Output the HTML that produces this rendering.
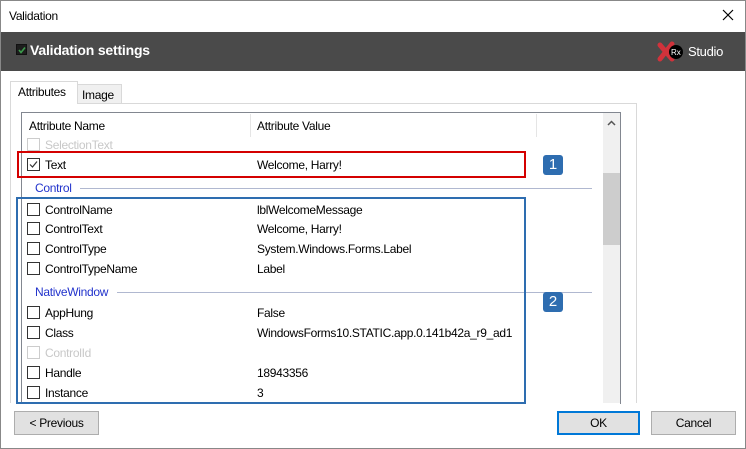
<!DOCTYPE html>
<html><head><style>
*{margin:0;padding:0;box-sizing:border-box}
body{width:746px;height:449px;overflow:hidden;background:#fff;font-family:"Liberation Sans",sans-serif;font-size:12px;color:#000;position:relative}
.a{position:absolute}
.t{position:absolute;white-space:nowrap;line-height:14px;letter-spacing:-0.3px}
.cb{position:absolute;width:13px;height:13px;border:1px solid #333;background:#fff}
.cb.d{border-color:#ccc}
.btn{position:absolute;height:24px;background:#e1e1e1;border:1px solid #adadad;text-align:center;line-height:22px;letter-spacing:-0.3px}
</style></head><body>
<div class="a" style="left:0;top:0;width:746px;height:449px;border:1px solid #888"></div>
<div class="t" style="left:9px;top:9px">Validation</div>
<svg class="a" style="left:722px;top:9px" width="12" height="12"><path d="M1 1L11 11M11 1L1 11" stroke="#000" stroke-width="1.2"/></svg>
<div class="a" style="left:1px;top:32px;width:744px;height:39px;background:#4a4a4a"></div>
<div class="a" style="left:16px;top:44px;width:11px;height:11px;background:#1d1d1d;border:1px solid #111"></div>
<svg class="a" style="left:17px;top:45px" width="10" height="10"><path d="M2 5L4 7.5L8 2.5" stroke="#3c9c4c" stroke-width="1.6" fill="none"/></svg>
<div class="t" style="left:30px;top:43px;color:#fff;font-size:14px;font-weight:bold;letter-spacing:-0.2px">Validation settings</div>
<svg class="a" style="left:656px;top:40px" width="32" height="24"><path d="M4 5 L16 19 M16 4 L4 19" stroke="#e0303a" stroke-width="5" stroke-linecap="round" opacity="0.9"/><circle cx="20" cy="12" r="7" fill="#000"/><text x="15" y="15" font-size="8" fill="#fff" font-family="Liberation Sans">Rx</text></svg>
<div class="t" style="left:688px;top:45px;color:#fff;font-size:13px">Studio</div>
<!-- tabs -->
<div class="a" style="left:10px;top:103px;width:627px;height:300px;border:1px solid #d9d9d9;border-bottom:none"></div>
<div class="a" style="left:77px;top:84px;width:45px;height:20px;background:#f0f0f0;border:1px solid #d9d9d9"></div>
<div class="t" style="left:82px;top:88px">Image</div>
<div class="a" style="left:10px;top:81px;width:68px;height:23px;background:#fff;border:1px solid #d9d9d9;border-bottom:none"></div>
<div class="t" style="left:18px;top:85px">Attributes</div>
<!-- list -->
<div class="a" style="left:21px;top:112px;width:600px;height:292px;border:1px solid #828790;border-bottom:none"></div>
<div class="a" style="left:603px;top:113px;width:17px;height:290px;background:#f0f0f0"></div>
<div class="a" style="left:603px;top:173px;width:17px;height:72px;background:#cdcdcd"></div>
<svg class="a" style="left:607px;top:120px" width="9" height="6"><path d="M1 5L4.5 1.5L8 5" stroke="#555" stroke-width="1.5" fill="none"/></svg>
<div class="a" style="left:250px;top:114px;width:1px;height:23px;background:#e5e5e5"></div>
<div class="a" style="left:536px;top:114px;width:1px;height:23px;background:#e5e5e5"></div>
<div class="t" style="left:29px;top:119px">Attribute Name</div>
<div class="t" style="left:257px;top:119px">Attribute Value</div>

<div class="cb d" style="left:27px;top:138px"></div><div class="t" style="left:45px;top:138px;color:#c8c8c8">SelectionText</div>
<div class="cb" style="left:27px;top:158px"></div><svg class="a" style="left:28px;top:159px" width="11" height="11"><path d="M2 5.5L4.5 8L9 2.5" stroke="#333" stroke-width="1.2" fill="none"/></svg><div class="t" style="left:45px;top:158px">Text</div><div class="t" style="left:257px;top:158px">Welcome, Harry!</div>
<div class="a" style="left:17px;top:151px;width:509px;height:27px;border:2px solid #d40000"></div>
<div class="a" style="left:543px;top:155px;width:20px;height:20px;background:#2e6db0;border-radius:3px;color:#fff;text-align:center;font-size:15px;line-height:20px">1</div>

<div class="t" style="left:35px;top:181px;color:#2233cc">Control</div>
<div class="a" style="left:80px;top:188px;width:512px;height:1px;background:#b0b8d0"></div>

<div class="cb" style="left:27px;top:203px"></div><div class="t" style="left:45px;top:203px">ControlName</div><div class="t" style="left:257px;top:203px">lblWelcomeMessage</div>
<div class="cb" style="left:27px;top:222px"></div><div class="t" style="left:45px;top:222px">ControlText</div><div class="t" style="left:257px;top:222px">Welcome, Harry!</div>
<div class="cb" style="left:27px;top:242px"></div><div class="t" style="left:45px;top:242px">ControlType</div><div class="t" style="left:257px;top:242px">System.Windows.Forms.Label</div>
<div class="cb" style="left:27px;top:262px"></div><div class="t" style="left:45px;top:262px">ControlTypeName</div><div class="t" style="left:257px;top:262px">Label</div>

<div class="t" style="left:35px;top:285px;color:#2233cc">NativeWindow</div>
<div class="a" style="left:117px;top:292px;width:475px;height:1px;background:#b0b8d0"></div>
<div class="a" style="left:543px;top:292px;width:20px;height:20px;background:#2e6db0;border-radius:3px;color:#fff;text-align:center;font-size:15px;line-height:20px">2</div>

<div class="cb" style="left:27px;top:306px"></div><div class="t" style="left:45px;top:306px">AppHung</div><div class="t" style="left:257px;top:306px">False</div>
<div class="cb" style="left:27px;top:326px"></div><div class="t" style="left:45px;top:326px">Class</div><div class="t" style="left:257px;top:326px">WindowsForms10.STATIC.app.0.141b42a_r9_ad1</div>
<div class="cb d" style="left:27px;top:346px"></div><div class="t" style="left:45px;top:346px;color:#c8c8c8">ControlId</div>
<div class="cb" style="left:27px;top:366px"></div><div class="t" style="left:45px;top:366px">Handle</div><div class="t" style="left:257px;top:366px">18943356</div>
<div class="cb" style="left:27px;top:386px"></div><div class="t" style="left:45px;top:386px">Instance</div><div class="t" style="left:257px;top:386px">3</div>
<div class="a" style="left:16px;top:197px;width:510px;height:207px;border:2px solid #2e6db0"></div>

<div class="btn" style="left:14px;top:411px;width:85px">&lt; Previous</div>
<div class="btn" style="left:557px;top:411px;width:83px;border:2px solid #0078d7;line-height:20px">OK</div>
<div class="btn" style="left:651px;top:411px;width:85px">Cancel</div>
</body></html>
